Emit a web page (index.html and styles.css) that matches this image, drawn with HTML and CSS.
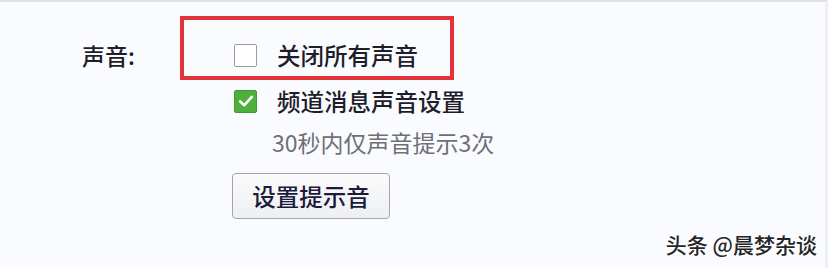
FILE: index.html
```html
<!DOCTYPE html>
<html lang="zh-CN">
<head>
<meta charset="utf-8">
<title>声音设置</title>
<link rel="stylesheet" href="styles.css">
</head>
<body>
<div class="frame">
  <div class="setting">
    <div class="label">声音:</div>
    <div class="options">
      <div class="highlight">
        <div class="row">
          <span class="box"></span>
          <span class="text">关闭所有声音</span>
        </div>
      </div>
      <div class="row row-second">
        <span class="box checked">
          <svg viewBox="0 0 24 24" width="24" height="24"><path d="M5 12.5 L10 17 L19 7" fill="none" stroke="#fff" stroke-width="3.2" stroke-linecap="round" stroke-linejoin="round"/></svg>
        </span>
        <span class="text">频道消息声音设置</span>
      </div>
      <div class="hint">30秒内仅声音提示3次</div>
      <button class="btn">设置提示音</button>
    </div>
  </div>
  <div class="watermark">头条 @晨梦杂谈</div>
</div>
</body>
</html>
```
FILE: styles.css
```css
html, body {
  margin: 0;
  padding: 0;
}
body {
  width: 828px;
  height: 268px;
  overflow: hidden;
  background: #f9fafd;
  font-family: "Microsoft YaHei", "Noto Sans CJK SC", "Noto Sans", sans-serif;
  color: #1e1e2a;
}
.frame {
  position: relative;
  box-sizing: border-box;
  width: 828px;
  height: 268px;
  border-top: 2px solid #dfe1e6;
  border-right: 3px solid #eef0f4;
  background: #fafbfe;
}
.setting {
  display: flex;
  padding: 14px 0 0 82px;
}
.label {
  width: 98px;
  flex: none;
  font-size: 23px;
  font-weight: 500;
  line-height: 24px;
  padding-top: 27px;
  color: #1e1e2a;
}
.options {
  display: flex;
  flex-direction: column;
  align-items: flex-start;
}
.highlight {
  border: 4px solid #e2333a;
  padding: 23px 0 9px 50px;
  box-sizing: border-box;
  width: 274px;
}
.row {
  display: flex;
  align-items: center;
  height: 24px;
}
.row-second {
  margin-top: 9px;
  padding-left: 54px;
}
.box {
  width: 23px;
  height: 23px;
  box-sizing: border-box;
  border: 1.5px solid #9a9ca3;
  border-radius: 2px;
  background: #fff;
  flex: none;
  margin-right: 20px;
  display: flex;
  align-items: center;
  justify-content: center;
}
.box.checked {
  background: #4fae3c;
  border: 1px solid #3f9a2f;
}
.box svg {
  width: 20px;
  height: 20px;
}
.text {
  font-size: 23.5px;
  font-weight: 500;
  line-height: 24px;
  color: #1e1e2a;
}
.hint {
  margin-top: 17px;
  padding-left: 92px;
  font-size: 23px;
  line-height: 24px;
  color: #6e6f77;
}
.btn {
  margin: 19px 0 0 52px;
  width: 158px;
  height: 46px;
  box-sizing: border-box;
  border: 1px solid #a3a5ab;
  border-radius: 4px;
  background: linear-gradient(#fbfbfc, #eeeff2);
  font-family: inherit;
  font-size: 23.5px;
  font-weight: 500;
  line-height: 24px;
  color: #1b1b3d;
  padding: 0;
}
.watermark {
  position: absolute;
  right: 8px;
  top: 229px;
  font-size: 21px;
  font-weight: 500;
  line-height: 26px;
  color: #262626;
  text-shadow: 0 0 2px #fff, 1px 1px 0 #fff;
}
```
